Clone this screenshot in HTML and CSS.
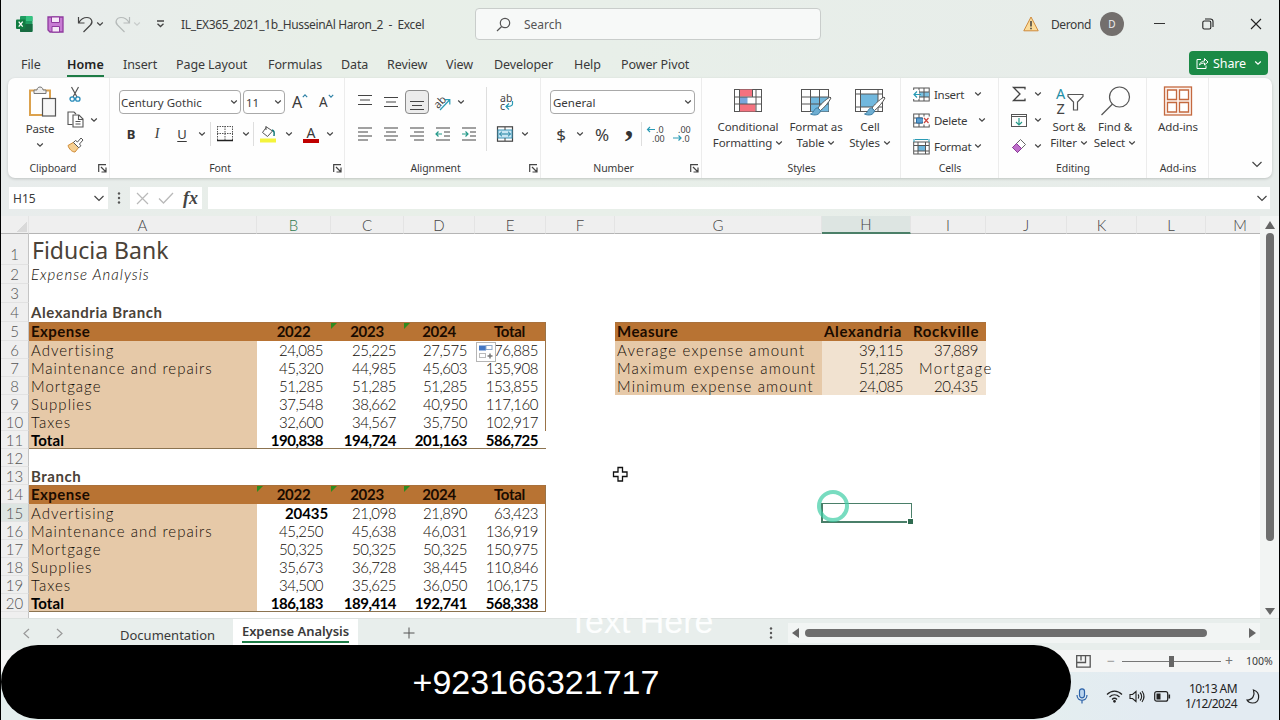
FILE: index.html
```html
<!DOCTYPE html>
<html lang="en">
<head>
    <meta charset="UTF-8">
    <meta name="viewport" content="width=device-width, initial-scale=1.0">
    <title>IL_EX365_2021_1b_HusseinAl Haron_2 - Excel</title>
    <link rel="stylesheet" href="styles.css">
</head>
<body>

<svg class="defs" width="0" height="0">
    <symbol id="chev" viewBox="0 0 8 6"><path d="M1.2 1.5 4 4.2 6.8 1.5" fill="none" stroke="currentColor" stroke-width="1.2"/></symbol>
    <symbol id="chev-big" viewBox="0 0 12 9"><path d="M1.500 2 6 6.500 10.500 2" fill="none" stroke="currentColor" stroke-width="1.2"/></symbol>
    <symbol id="launch" viewBox="0 0 9 9"><path d="M.7 8V.7H8M3 3l4.5 4.5M8 3.5V8H3.5" fill="none" stroke="#444" stroke-width="1.2"/></symbol>
</svg>

<div class="window">
    <!-- title bar -->
    <div class="titlebar">
        <svg class="logo" width="17" height="16" viewBox="0 0 17 16"><rect x="4" width="12.500" height="16" rx="1" fill="#1f9d61"/><path d="M10 0h5.500a1 1 0 0 1 1 1v4H10z" fill="#35c481"/><path d="M4 8h12.500v7a1 1 0 0 1-1 1H5a1 1 0 0 1-1-1z" fill="#176b41"/><rect y="3.500" width="9.500" height="9.500" rx="1" fill="#107c41"/><path d="m2.700 5.700 4 5M6.700 5.700l-4 5" stroke="#fff" stroke-width="1.300"/></svg>
        <svg class="save" width="17" height="17" viewBox="0 0 17 17"><path d="M1 1h15v15H3l-2-2z" fill="#c77bd3" stroke="#8f3a9e" stroke-width="1.300"/><path d="M4.500 1h8v5.500h-8zM5 10.500h7.500V16H5z" fill="#f6e9f8" stroke="#8f3a9e"/></svg>
        <svg class="undo" width="17" height="17" viewBox="0 0 17 17" fill="none" stroke="#444" stroke-width="1.200"><path d="M1.500 1v6h6M1.800 6.700C4 3 6.800 1.500 10 1.500c4.500 0 6.500 4.500 3.500 7.500L6.500 16"/></svg>
        <svg class="chev undo-chev" width="8" height="6"><use href="#chev"/></svg>
        <svg class="redo" width="17" height="17" viewBox="0 0 17 17" fill="none" stroke="#b5bab9" stroke-width="1.200"><path d="M15.500 1v6h-6M15.200 6.700C13 3 10.200 1.500 7 1.500c-4.500 0-6.500 4.500-3.500 7.500l7 7"/></svg>
        <svg class="chev redo-chev" width="8" height="6"><use href="#chev"/></svg>
        <svg class="qat" width="9" height="8" viewBox="0 0 9 8" fill="none" stroke="#444" stroke-width="1.300"><path d="M1 1h7M1.500 3.700l3 2.800 3-2.800"/></svg>
        <span class="doc-name">IL_EX365_2021_1b_HusseinAl Haron_2 &nbsp;-&nbsp; Excel</span>
        <div class="search">
            <svg width="15" height="15" viewBox="0 0 15 15" fill="none" stroke="#555" stroke-width="1.200"><circle cx="9" cy="6" r="4.700"/><path d="M5.700 9.500 1 14"/></svg>
            <span>Search</span>
        </div>
        <svg class="warn" width="16" height="16" viewBox="0 0 16 16"><path d="M8 1 15.200 14.800H.8z" fill="#fbdc9a" stroke="#cf8a3c"/><path d="M8 5v5.500M8 11.800v1.500" stroke="#333" stroke-width="1.400"/></svg>
        <span class="user">Derond</span>
        <span class="avatar">D</span>
        <svg class="win-min" width="12" height="12" viewBox="0 0 12 12"><path d="M0 5.500h11" stroke="#333"/></svg>
        <svg class="win-max" width="12" height="12" viewBox="0 0 12 12" fill="none" stroke="#222" stroke-width="1.100"><rect x=".8" y="3" width="8" height="8" rx="1.500"/><path d="M3 1h5.500a2.500 2.500 0 0 1 2.500 2.500V9"/></svg>
        <svg class="win-close" width="12" height="12" viewBox="0 0 12 12"><path d="m1 1 10 10M11 1 1 11" stroke="#222" stroke-width="1.100"/></svg>
    </div>

    <!-- ribbon tabs -->
    <div class="tabs">
        <span>File</span><span class="active">Home</span><span>Insert</span><span>Page Layout</span><span>Formulas</span><span>Data</span><span>Review</span><span>View</span><span>Developer</span><span>Help</span><span>Power Pivot</span>
        <div class="share">
            <svg width="13" height="12" viewBox="0 0 13 12" fill="none" stroke="#fff"><path d="M5 2.500H1v9h9V8.500M3.500 8C4 5.500 6 4 8.500 4V1.500L12 5 8.500 8V6C6.500 6 5 6.500 3.500 8z"/></svg>
            <span>Share</span>
            <svg class="chev" width="8" height="6"><use href="#chev"/></svg>
        </div>
    </div>

    <!-- ribbon -->
    <div class="ribbon">
        <div class="group clipboard">
            <div class="body">
                <div class="paste">
                    <svg width="30" height="32" viewBox="0 0 30 32"><rect x="2" y="4.500" width="20" height="24.500" fill="#fff" stroke="#dca24e" stroke-width="2"/><path d="M6 7.500V4h3c0-4 6-4 6 0h3v3.500z" fill="#eee" stroke="#777"/><rect x="14.500" y="12.500" width="13" height="17.500" fill="#f7f7f7" stroke="#555" stroke-width="1.200"/></svg>
                    <span>Paste</span>
                    <svg class="chev" width="8" height="6"><use href="#chev"/></svg>
                </div>
                <div class="clip-tools">
                    <svg width="12" height="17" viewBox="0 0 12 17" fill="none"><path d="M2.500 1 8 11M9.500 1 4 11" stroke="#555" stroke-width="1.200"/><circle cx="3.200" cy="13" r="2.200" stroke="#2a8cba" stroke-width="1.300"/><circle cx="8.800" cy="13" r="2.200" stroke="#2a8cba" stroke-width="1.300"/></svg>
                    <svg width="17" height="17" viewBox="0 0 17 17" fill="#fff" stroke="#555" stroke-width="1.100"><path d="M5.500 13.500H1V1h6l2 2"/><path d="M6 4h6l4 4v8H6zM11.500 4v4.500H16M8.500 10.500h5M8.500 13h5"/></svg>
                    <svg width="17" height="16" viewBox="0 0 17 16"><path d="M1 8.500 7 5l5 5-4 5c-3 0-6-3-7-6.500z" fill="#f6cf91" stroke="#d08b35"/><path d="m6.500 5.500 2-2 2 1.500L14 1l2 2-3.500 4 1.300 1.800-2 2z" fill="#fff" stroke="#555"/></svg>
                </div>
                <svg class="chev" width="8" height="6"><use href="#chev"/></svg>
            </div>
            <div class="label">Clipboard<svg width="9" height="9"><use href="#launch"/></svg></div>
        </div>

        <div class="group font">
            <div class="body stack">
                <div class="line">
                    <div class="combo font-name">Century Gothic<svg class="chev" width="8" height="6"><use href="#chev"/></svg></div>
                    <div class="combo font-size">11<svg class="chev" width="8" height="6"><use href="#chev"/></svg></div>
                    <span class="resize grow">A<svg width="6" height="4" viewBox="0 0 6 4"><path d="m.8 3.200 2.200-2.400 2.200 2.400"/></svg></span>
                    <span class="resize shrink">A<svg width="6" height="4" viewBox="0 0 6 4"><path d="m.8.800 2.200 2.400L5.200.800"/></svg></span>
                </div>
                <div class="line">
                    <b class="w26">B</b><span class="w26 ital">I</span><span class="w24 under">U</span>
                    <svg class="chev w16" height="6"><use href="#chev"/></svg><i class="sep"></i>
                    <svg class="w28" height="16" viewBox="0 0 28 16" fill="none" stroke="#555"><path d="M6 .5h16M6.500 0v14M14 0v14M21.500 0v14M6 7.500h16" stroke-dasharray="1.500 1"/><path d="M6 14.500h16" stroke="#222" stroke-width="1.500"/></svg>
                    <svg class="chev w14" height="6"><use href="#chev"/></svg><i class="sep"></i>
                    <svg class="w28" height="18" viewBox="0 0 28 18"><path d="m12.500 2-4 5.500 5 4 5-5.500zM12 1v4" fill="#fff" stroke="#555"/><path d="M18 5c2.500.5 2.500 3 2 6" fill="none" stroke="#177" stroke-width="1.500"/><rect x="6" y="13.500" width="16" height="4" fill="#f4f43c"/></svg>
                    <svg class="chev w14" height="6"><use href="#chev"/></svg>
                    <span class="w30 color">A</span>
                    <svg class="chev w8" height="6"><use href="#chev"/></svg>
                </div>
            </div>
            <div class="label">Font<svg width="9" height="9"><use href="#launch"/></svg></div>
        </div>

        <div class="group align">
            <div class="body">
                <div class="stack">
                    <div class="line">
                        <svg class="w26" height="24" viewBox="0 0 26 24" stroke="#444" stroke-width="1.200"><path d="M6 5.500h14M8 10h10M6 14.500h14"/></svg>
                        <svg class="w26" height="24" viewBox="0 0 26 24" stroke="#444" stroke-width="1.200"><path d="M6 7.500h14M8 12h10M6 16.500h14"/></svg>
                        <svg class="w26 pressed" height="24" viewBox="0 0 26 24" stroke="#444" stroke-width="1.200"><rect x="1.500" y=".5" width="23" height="23" rx="3.500" fill="#ececec" stroke="#8a8a8a" stroke-width="1"/><path d="M6 11.500h14M8 15.500h10M6 19.500h14"/></svg>
                        <svg class="w26" height="22" viewBox="0 0 26 22"><text x="4" y="15" font-size="11" transform="rotate(-45 10 12)" fill="#444">ab</text><path d="m10 19 9.500-10M15 8.700H19.800V13.500" fill="none" stroke="#2a9bb5" stroke-width="1.200"/></svg>
                        <svg class="chev w10" height="6"><use href="#chev"/></svg>
                    </div>
                    <div class="line">
                        <svg class="w26" height="16" viewBox="0 0 26 16" stroke="#444" stroke-width="1.200"><path d="M6 2h14M6 6h10M6 10h14M6 14h10"/></svg>
                        <svg class="w26" height="16" viewBox="0 0 26 16" stroke="#444" stroke-width="1.200"><path d="M6 2h14M8 6h10M6 10h14M8 14h10"/></svg>
                        <svg class="w26" height="16" viewBox="0 0 26 16" stroke="#444" stroke-width="1.200"><path d="M6 2h14M10 6h10M6 10h14M10 14h10"/></svg>
                        <svg class="w26" height="16" viewBox="0 0 26 16" stroke="#444" stroke-width="1.200" fill="none"><path d="M6 2h14M14 6h6M14 10h6M6 14h14"/><path d="M12 8H6M8.500 5.500 6 8l2.500 2.500" stroke="#259a8a"/></svg>
                        <svg class="w26" height="16" viewBox="0 0 26 16" stroke="#444" stroke-width="1.200" fill="none"><path d="M6 2h14M14 6h6M14 10h6M6 14h14"/><path d="M6 8h6M9.500 5.500 12 8l-2.500 2.500" stroke="#259a8a"/></svg>
                    </div>
                </div>
                <i class="sep tall"></i>
                <div class="stack merge">
                    <div class="line">
                        <svg width="38" height="18" viewBox="0 0 38 18"><text x="13" y="8.500" font-size="10.500" fill="#444">ab</text><text x="13" y="16.500" font-size="10.500" fill="#444">c</text><path d="M25.500 8v3c0 2-2 2.500-6 2.500M22 10.500l-3 3 3 3" fill="none" stroke="#2a9bb5" stroke-width="1.200"/></svg>
                    </div>
                    <div class="line">
                        <svg class="w34" height="16" viewBox="0 0 34 16"><rect x="10.500" y=".8" width="15" height="14.400" fill="#fff" stroke="#444" stroke-width="1.200"/><rect x="11" y="4" width="14" height="8" fill="#c9e6f3" stroke="#3b93b5"/><path d="M18 1v3M18 12v3" stroke="#444"/><path d="M12.500 8h11M15 5.700 12.500 8l2.500 2.300M21 5.700 23.500 8 21 10.300" fill="none" stroke="#1b7f9e"/></svg>
                        <svg class="chev w8" height="6"><use href="#chev"/></svg>
                    </div>
                </div>
            </div>
            <div class="label">Alignment<svg width="9" height="9"><use href="#launch"/></svg></div>
        </div>

        <div class="group number">
            <div class="body stack">
                <div class="line"><div class="combo format">General<svg class="chev" width="8" height="6"><use href="#chev"/></svg></div></div>
                <div class="line">
                    <span class="w24 sym">$</span><svg class="chev w14" height="6"><use href="#chev"/></svg>
                    <span class="w30 sym">%</span><b class="w24 comma">,</b><i class="sep"></i>
                    <svg class="w26" height="18" viewBox="0 0 26 18"><path d="M13 4.500H5.500M8 2 5.500 4.500 8 7" fill="none" stroke="#2a9bb5" stroke-width="1.200"/><text x="14" y="8" font-size="9" fill="#444">.0</text><text x="10" y="16.500" font-size="9" fill="#444">.00</text></svg>
                    <svg class="w26" height="18" viewBox="0 0 26 18"><text x="10" y="8" font-size="9" fill="#444">.00</text><path d="M5 13h8M10.500 10.500 13 13l-2.500 2.500" fill="none" stroke="#2a9bb5" stroke-width="1.200"/><text x="14" y="16.500" font-size="9" fill="#444">.0</text></svg>
                </div>
            </div>
            <div class="label">Number<svg width="9" height="9"><use href="#launch"/></svg></div>
        </div>

        <div class="group styles">
            <div class="body">
                <div class="big cond">
                    <svg width="30" height="30" viewBox="0 0 30 30"><rect x="1.500" y="3.500" width="27" height="22" fill="#fff" stroke="#555"/><path d="M6.500 3.500h13v7h-13zM6.500 18h16v7.500h-16z" fill="#f4727f"/><path d="M6.500 11h8v7h-8z" fill="#7aa7dc"/><path d="M1.500 11h27M1.500 18h27M6.500 3.500v22M19.500 3.500V11M23 3.500v22" stroke="#555" fill="none"/></svg>
                    <span>Conditional</span><span>Formatting <svg class="chev" width="8" height="6"><use href="#chev"/></svg></span>
                </div>
                <div class="big table">
                    <svg width="32" height="30" viewBox="0 0 32 30"><rect x="1.500" y="3.500" width="27" height="22" fill="#fff" stroke="#555"/><path d="M11 11h17.500v14.500H11z" fill="#71b8de"/><path d="M1.500 11h27M1.500 18h27M10.500 3.500v22M19.500 3.500v22" stroke="#555" fill="none"/><path d="M30 11c-5 3-10 8-12 11l2.500 2.500C24 22 29 16 31 12z" fill="#fff" stroke="#555"/><path d="M17.500 22c-4 0-3 5-7 6 4 2 9.500 1 10-3.500z" fill="#6eaed2" stroke="#3c7ea5"/></svg>
                    <span>Format as</span><span>Table <svg class="chev" width="8" height="6"><use href="#chev"/></svg></span>
                </div>
                <div class="big cell">
                    <svg width="32" height="30" viewBox="0 0 32 30"><rect x="1.500" y="3.500" width="27" height="22" fill="#fff" stroke="#555"/><path d="M6.500 8h17.500v13H6.500z" fill="#71b8de"/><path d="M1.500 8h27M1.500 21h27M6.500 3.500v22M24 3.500v22" stroke="#555" fill="none"/><path d="M30 11c-5 3-10 8-12 11l2.500 2.500C24 22 29 16 31 12z" fill="#fff" stroke="#555"/><path d="M17.500 22c-4 0-3 5-7 6 4 2 9.500 1 10-3.500z" fill="#6eaed2" stroke="#3c7ea5"/></svg>
                    <span>Cell</span><span>Styles <svg class="chev" width="8" height="6"><use href="#chev"/></svg></span>
                </div>
            </div>
            <div class="label">Styles</div>
        </div>

        <div class="group cells">
            <div class="body">
                <div class="item"><svg width="17" height="15" viewBox="0 0 17 15" fill="none"><rect x=".7" y="1" width="15.500" height="13" fill="#fff" stroke="#555"/><path d="M7 5h9v5H7z" fill="#7cc1e2"/><path d="M6 1v13M11 1v13M6 5h10M6 10h10" stroke="#555"/><path d="M0 3h6v9H0z" fill="#fff"/><path d="M8 7.500H1M4 4.500l-3 3 3 3" stroke="#2a9bb5" stroke-width="1.200"/></svg><span>Insert</span><svg class="chev" width="8" height="6"><use href="#chev"/></svg></div>
                <div class="item wide"><svg width="17" height="15" viewBox="0 0 17 15" fill="none"><rect x=".7" y="1" width="15.500" height="13" fill="#fff" stroke="#555"/><path d="M1 5h15M1 10h15M6 1v13M11 1v13" stroke="#555"/><path d="M3.500 5H9l2 2.500L9 10H3.500z" fill="#5c9fd0" stroke="#2b6fa5"/><path d="M10 3.500h7v8h-7z" fill="#fff"/><path d="m11 5 4.500 5M15.500 5 11 10" stroke="#c9453f" stroke-width="1.200"/></svg><span>Delete</span><svg class="chev" width="8" height="6"><use href="#chev"/></svg></div>
                <div class="item"><svg width="17" height="17" viewBox="0 0 17 17" fill="none"><rect x=".7" y="4" width="15.500" height="12" fill="#fff" stroke="#555"/><path d="M5 7h7.500v6H5z" fill="#6eb6dc"/><path d="M1 7.500h15M1 13h15M5 4v12M12.500 4v12" stroke="#555"/><path d="M1 1v3M16 1v3M2 1.500h13" stroke="#2a9bb5"/></svg><span>Format</span><svg class="chev" width="8" height="6"><use href="#chev"/></svg></div>
            </div>
            <div class="label">Cells</div>
        </div>

        <div class="group editing">
            <div class="body">
                <div class="edit-tools">
                    <div><svg width="16" height="16" viewBox="0 0 16 16" fill="none" stroke="#444" stroke-width="1.300"><path d="M14 3.500V1.500H2.500L9 8l-6.500 6.500H14v-2"/></svg><svg class="chev" width="8" height="6"><use href="#chev"/></svg></div>
                    <div><svg width="16" height="15" viewBox="0 0 16 15" fill="none" stroke="#555"><rect x=".5" y="1.500" width="15" height="12"/><path d="M1 3.500h14"/><path d="M8 5v7M5 9l3 3 3-3" stroke="#259a8a" stroke-width="1.200"/></svg><svg class="chev" width="8" height="6"><use href="#chev"/></svg></div>
                    <div><svg width="16" height="16" viewBox="0 0 16 16"><path d="m9.500 1.500 5 5-8 8-5-5z" fill="#fff" stroke="#666"/><path d="m5.500 5.500 5 5-4 4-5-5z" fill="#bf6fcb" stroke="#8b3b99"/></svg><svg class="chev" width="8" height="6"><use href="#chev"/></svg></div>
                </div>
                <div class="big sort">
                    <svg width="30" height="30" viewBox="0 0 30 30" fill="none"><text x="2" y="12.500" font-size="14.500" fill="#1f8fa8">A</text><text x="2.500" y="28" font-size="14.500" fill="#444">Z</text><path d="M14 8.500h15v2L23.500 16v8h-4v-8L14 10.500z" stroke="#555" stroke-width="1.200"/></svg>
                    <span>Sort &amp;</span><span>Filter <svg class="chev" width="8" height="6"><use href="#chev"/></svg></span>
                </div>
                <div class="big find">
                    <svg width="30" height="30" viewBox="0 0 30 30" fill="none" stroke="#555" stroke-width="1.200"><circle cx="19.500" cy="11" r="10"/><path d="M12.500 18 1.500 29"/></svg>
                    <span>Find &amp;</span><span>Select <svg class="chev" width="8" height="6"><use href="#chev"/></svg></span>
                </div>
            </div>
            <div class="label">Editing</div>
        </div>

        <div class="group addins">
            <div class="body">
                <div class="big">
                    <svg width="30" height="30" viewBox="0 0 30 30" fill="none" stroke="#c4693f" stroke-width="1.300"><rect x="1.500" y="1" width="27" height="28" fill="#fdf3ee"/><path d="M4.500 4h9v9.500h-9zM16.500 4h9v9.500h-9zM4.500 16.500h9V26h-9zM16.500 16.500h9V26h-9z" fill="#fff"/></svg>
                    <span>Add-ins</span>
                </div>
            </div>
            <div class="label">Add-ins</div>
        </div>

        <svg class="chev collapse" width="12" height="9"><use href="#chev-big"/></svg>
    </div>

    <!-- formula bar -->
    <div class="formula">
        <div class="name-box">H15<svg class="chev" width="12" height="9"><use href="#chev-big"/></svg></div>
        <svg class="dots" width="4" height="12" viewBox="0 0 4 12" fill="#555"><circle cx="2" cy="1.500" r="1.200"/><circle cx="2" cy="6" r="1.200"/><circle cx="2" cy="10.500" r="1.200"/></svg>
        <div class="fx">
            <svg width="13" height="13" viewBox="0 0 13 13"><path d="m1 1 11 11M12 1 1 12" stroke="#b9b9b9" stroke-width="1.200"/></svg>
            <svg width="16" height="12" viewBox="0 0 16 12" fill="none"><path d="m1 6.500 4.500 4.500L15 1" stroke="#b9b9b9" stroke-width="1.300"/></svg>
            <i>fx</i>
        </div>
        <div class="formula-input"><svg class="chev" width="12" height="9"><use href="#chev-big"/></svg></div>
    </div>

    <!-- worksheet -->
    <div class="sheet">
        <div class="grid">
            <table>
                <colgroup><col class="rh"><col class="a"><col class="b"><col class="c"><col class="d"><col class="e"><col class="f"><col class="g"><col class="h"><col class="i"><col class="j"><col class="k"><col class="l"><col class="m"></colgroup>
                <tr class="heads"><th class="corner"></th><th>A</th><th class="green">B</th><th>C</th><th>D</th><th>E</th><th>F</th><th>G</th><th class="sel">H</th><th>I</th><th>J</th><th>K</th><th>L</th><th>M</th></tr>
                <tr class="r1"><th>1</th><td class="bank" colspan="13">Fiducia Bank</td></tr>
                <tr class="r19"><th>2</th><td class="sub" colspan="13">Expense Analysis</td></tr>
                <tr class="r19"><th>3</th><td colspan="13"></td></tr>
                <tr class="r19"><th>4</th><td class="branch" colspan="13">Alexandria Branch</td></tr>
                <tr class="r19 head"><th>5</th><td class="hd left">Expense</td><td class="hd">2022</td><td class="hd err">2023</td><td class="hd err">2024</td><td class="hd edge">Total</td><td></td><td class="hd left">Measure</td><td class="hd left name">Alexandria</td><td class="hd left name">Rockville</td><td colspan="4"></td></tr>
                <tr><th>6</th><td class="tan">Advertising</td><td class="n">24,085</td><td class="n">25,225</td><td class="n">27,575</td><td class="n edge">76,885</td><td></td><td class="tan m">Average expense amount</td><td class="n pale">39,115</td><td class="n pale">37,889</td><td colspan="4"></td></tr>
                <tr><th>7</th><td class="tan">Maintenance and repairs</td><td class="n">45,320</td><td class="n">44,985</td><td class="n">45,603</td><td class="n edge">135,908</td><td></td><td class="tan m">Maximum expense amount</td><td class="n pale">51,285</td><td class="pale spill">Mortgage</td><td colspan="4"></td></tr>
                <tr><th>8</th><td class="tan">Mortgage</td><td class="n">51,285</td><td class="n">51,285</td><td class="n">51,285</td><td class="n edge">153,855</td><td></td><td class="tan m">Minimum expense amount</td><td class="n pale">24,085</td><td class="n pale">20,435</td><td colspan="4"></td></tr>
                <tr><th>9</th><td class="tan">Supplies</td><td class="n">37,548</td><td class="n">38,662</td><td class="n">40,950</td><td class="n edge">117,160</td><td colspan="8"></td></tr>
                <tr><th>10</th><td class="tan">Taxes</td><td class="n">32,600</td><td class="n">34,567</td><td class="n">35,750</td><td class="n edge">102,917</td><td colspan="8"></td></tr>
                <tr class="total"><th>11</th><td class="tan">Total</td><td class="n">190,838</td><td class="n">194,724</td><td class="n">201,163</td><td class="n">586,725</td><td colspan="8"></td></tr>
                <tr><th>12</th><td colspan="13"></td></tr>
                <tr><th>13</th><td class="branch" colspan="13">Branch</td></tr>
                <tr class="r19 head"><th>14</th><td class="hd left">Expense</td><td class="hd err">2022</td><td class="hd err">2023</td><td class="hd err">2024</td><td class="hd edge">Total</td><td colspan="8"></td></tr>
                <tr><th class="sel">15</th><td class="tan">Advertising</td><td class="n typed">20435</td><td class="n">21,098</td><td class="n">21,890</td><td class="n edge">63,423</td><td colspan="8"></td></tr>
                <tr><th>16</th><td class="tan">Maintenance and repairs</td><td class="n">45,250</td><td class="n">45,638</td><td class="n">46,031</td><td class="n edge">136,919</td><td colspan="8"></td></tr>
                <tr><th>17</th><td class="tan">Mortgage</td><td class="n">50,325</td><td class="n">50,325</td><td class="n">50,325</td><td class="n edge">150,975</td><td colspan="8"></td></tr>
                <tr><th>18</th><td class="tan">Supplies</td><td class="n">35,673</td><td class="n">36,728</td><td class="n">38,445</td><td class="n edge">110,846</td><td colspan="8"></td></tr>
                <tr><th>19</th><td class="tan">Taxes</td><td class="n">34,500</td><td class="n">35,625</td><td class="n">36,050</td><td class="n edge">106,175</td><td colspan="8"></td></tr>
                <tr class="total"><th>20</th><td class="tan">Total</td><td class="n">186,183</td><td class="n">189,414</td><td class="n">192,741</td><td class="n edge">568,338</td><td colspan="8"></td></tr>
                <tr class="rest"><th></th><td colspan="13"></td></tr>
            </table>
        </div>
        <div class="vscroll"><i class="up"></i><i class="thumb"></i><i class="down"></i></div>

        <svg class="fill-options" width="20" height="20" viewBox="0 0 20 20"><rect x=".5" y=".5" width="19" height="19" fill="#fff" stroke="#b5b5b5"/><rect x="3" y="3.500" width="7" height="5" fill="#4377c4"/><rect x="10" y="3.500" width="6" height="4" fill="none" stroke="#8fa9c9"/><rect x="3.500" y="11.500" width="6" height="4" fill="none" stroke="#bbb"/><path d="M14 11.500v5M11.500 14h5" stroke="#777" stroke-width="1.500"/></svg>
        <div class="active-cell"></div>
        <div class="click-ring"></div>
        <svg class="cursor" width="16" height="16" viewBox="0 0 16 16"><path d="M6 1.500h4.500V6H15v4.500h-4.500V15H6v-4.500H1.500V6H6z" fill="#fff" stroke="#111" stroke-width="1.300"/></svg>
    </div>

    <!-- sheet tabs -->
    <div class="sheet-tabs">
        <svg class="prev" width="7" height="11" viewBox="0 0 7 11" fill="none" stroke="#999" stroke-width="1.200"><path d="M6 1 1 5.500 6 10"/></svg>
        <svg class="next" width="7" height="11" viewBox="0 0 7 11" fill="none" stroke="#999" stroke-width="1.200"><path d="m1 1 5 4.500L1 10"/></svg>
        <span class="tab">Documentation</span>
        <span class="tab current"><span>Expense Analysis</span></span>
        <svg class="plus" width="12" height="12" viewBox="0 0 12 12"><path d="M6 .5v11M.5 6h11" stroke="#555"/></svg>
        <svg class="dots" width="4" height="12" viewBox="0 0 4 12" fill="#555"><circle cx="2" cy="1.500" r="1.200"/><circle cx="2" cy="6" r="1.200"/><circle cx="2" cy="10.500" r="1.200"/></svg>
        <div class="hscroll"><i class="back"></i><i class="thumb"></i><i class="fwd"></i></div>
        <span class="watermark">Text Here</span>
    </div>

    <!-- status bar -->
    <div class="status">
        <svg class="view" width="15" height="13" viewBox="0 0 15 13" fill="none" stroke="#555" stroke-width="1.300"><path d="M.7.700h13.500v11.500H.7zM5 1v4.500M9.500 1v6.500H.7"/></svg>
        <span class="minus">−</span>
        <div class="slider"><i></i></div>
        <span class="more">+</span>
        <span class="zoom">100%</span>
    </div>

    <!-- taskbar -->
    <div class="taskbar">
        <svg class="mic" width="12" height="16" viewBox="0 0 12 16" fill="none" stroke="#2b62a8" stroke-width="1.200"><rect x="3.500" y=".8" width="5" height="9" rx="2.500" fill="#b9d4ee"/><path d="M1 7c0 7 10 7 10 0M6 12.500v3"/></svg>
        <svg class="wifi" width="17" height="13" viewBox="0 0 17 13" fill="none" stroke="#222" stroke-width="1.200"><path d="M1 4.500c4.500-4.500 10.500-4.500 15 0M3.500 7c3-3 7-3 10 0M6 9.500c1.500-1.500 3.500-1.500 5 0"/><circle cx="8.500" cy="11.300" r=".8" fill="#222"/></svg>
        <svg class="sound" width="15" height="13" viewBox="0 0 15 13" fill="none" stroke="#222" stroke-width="1.100"><path d="M1 4.500h2.500L7 1.500v10L3.500 8.500H1zM9 4.500c1 1 1 3 0 4M11 2.500c2.200 2.200 2.200 5.800 0 8M13 1c2.500 3.500 2.500 7.500 0 11"/></svg>
        <svg class="battery" width="17" height="11" viewBox="0 0 17 11"><rect x=".7" y=".7" width="13" height="9.500" rx="2" fill="none" stroke="#222" stroke-width="1.200"/><rect x="2.500" y="2.500" width="4" height="6" fill="#222"/><path d="M15.300 3.500v4" stroke="#222" stroke-width="1.600"/></svg>
        <div class="clock"><span>10:13 AM</span><span>1/12/2024</span></div>
        <svg class="moon" width="14" height="15" viewBox="0 0 14 15" fill="none" stroke="#222" stroke-width="1.200"><path d="M7.500 1C15 3.500 14 14 6.500 14 4 14 2 12.800 1 11c6 0 8-5 6.500-10z"/></svg>
    </div>

    <div class="banner">+923166321717</div>
</div>

</body>
</html>
```
FILE: styles.css
```css
* {
    box-sizing: border-box;
}
body {
    margin: 0;
    width: 1280px;
    height: 720px;
    overflow: hidden;
    background-color: #000;
    font-family: "Noto Sans", "Open Sans", sans-serif;
    font-size: 12px;
    color: #3a3a3a;
}
svg {
    display: block;
    flex: none;
    overflow: visible;
}
svg text {
    font-family: "Noto Sans", sans-serif;
}
.defs {
    position: absolute;
}
.chev {
    color: #444;
}
.window {
    position: relative;
    display: flex;
    flex-direction: column;
    width: 1278px;
    height: 720px;
    margin-left: 1px;
    overflow: hidden;
    background: linear-gradient(90deg, #e8ecec 0, #e8efe8 330px, #e8efe9 600px, #e7ecea 1278px);
}

/* title bar */
.titlebar {
    display: flex;
    align-items: center;
    height: 48px;
    padding-left: 15px;
}
.save { margin-left: 14px; }
.undo { margin-left: 13px; }
.undo-chev { margin-left: 2px; }
.redo { margin-left: 10px; }
.redo-chev { margin-left: 2px; color: #c8cccb; }
.qat { margin-left: 15px; }
.doc-name {
    width: 294px;
    margin-left: 16px;
    white-space: nowrap;
    letter-spacing: -0.35px;
}
.search {
    display: flex;
    align-items: center;
    width: 346px;
    height: 32px;
    padding-left: 20px;
    gap: 13px;
    border: 1px solid #c9cdcb;
    border-radius: 4px;
    background-color: #f7f9f8;
    color: #555;
}
.warn { margin-left: 202px; }
.user { margin-left: 12px; width: 49px; letter-spacing: -0.4px; }
.avatar {
    width: 24px;
    height: 24px;
    border-radius: 50%;
    background-color: #736f6d;
    color: #eee;
    font-size: 10px;
    line-height: 24px;
    text-align: center;
}
.win-min { margin-left: 30px; }
.win-max { margin-left: 36px; }
.win-close { margin-left: 36px; }

/* ribbon tabs */
.tabs {
    display: grid;
    grid-template-columns: 46px 56px 53px 92px 73px 46px 59px 48px 80px 47px 568px auto;
    align-items: center;
    height: 30px;
    padding: 2px 0 0 20px;
    font-size: 12.5px;
    letter-spacing: -0.1px;
    white-space: nowrap;
}
.tabs .active {
    justify-self: start;
    height: 23px;
    line-height: 21px;
    margin-top: 2px;
    border-bottom: 2px solid #1e7c46;
    color: #222;
    font-weight: 600;
    letter-spacing: 0.1px;
}
.share {
    display: flex;
    align-items: center;
    width: 79px;
    height: 24px;
    margin-top: -2px;
    gap: 4px;
    padding-left: 7px;
    border-radius: 4px;
    background-color: #1b8a46;
    color: #fff;
}
.share .chev { margin-left: 4px; color: #fff; }

/* ribbon */
.ribbon {
    display: flex;
    width: 1264px;
    height: 100px;
    margin-left: 7px;
    border-radius: 7px;
    background-color: #fefefe;
    box-shadow: 0 1px 3px rgba(0, 0, 0, 0.18);
}
.group {
    display: flex;
    flex-direction: column;
    flex: none;
    border-right: 1px solid #ececec;
}
.body {
    display: flex;
    height: 80px;
}
.label {
    display: flex;
    justify-content: center;
    align-items: center;
    position: relative;
    height: 20px;
    padding-left: 1px;
    font-size: 10.5px;
    letter-spacing: -0.1px;
}
.label svg {
    position: absolute;
    right: 2px;
    top: 6px;
}
.stack {
    display: flex;
    flex-direction: column;
    padding-top: 8px;
}
.line {
    display: flex;
    align-items: center;
    height: 32px;
}
.line > span, .line > b {
    text-align: center;
    flex: none;
}
.w8 { width: 8px; }
.w10 { width: 10px; }
.w14 { width: 14px; }
.w16 { width: 16px; }
.w24 { width: 24px; }
.w26 { width: 26px; }
.w28 { width: 28px; }
.w30 { width: 30px; }
.w34 { width: 34px; }
.sep {
    width: 1px;
    height: 24px;
    background-color: #dedede;
}
.sep.tall {
    height: 64px;
    margin-top: 9px;
}
.combo {
    display: flex;
    justify-content: space-between;
    align-items: center;
    height: 24px;
    padding: 0 2px 0 1px;
    border: 1px solid #a9a9a9;
    border-radius: 4px;
    background-color: #fff;
    font-size: 11.5px;
}
.clipboard { width: 102px; }
.clipboard .body { padding-left: 7px; }
.paste {
    display: flex;
    flex-direction: column;
    align-items: center;
    width: 50px;
    padding-top: 8px;
    font-size: 11.5px;
    letter-spacing: -0.2px;
}
.paste > svg:first-child { margin-left: 6px; }
.paste span { line-height: 18px; margin-top: 2px; }
.paste .chev { margin-top: 4px; }
.clip-tools {
    display: grid;
    grid-template-rows: 25px 25px 25px;
    width: 20px;
    padding-top: 4px;
    align-items: center;
    justify-items: center;
}
.clipboard .body > .chev { margin: 39px 0 0 5px; }
.clipboard .label { padding-right: 12px; }

.font { width: 235px; }
.font .stack, .font .body { padding-left: 9px; }
.font .line + .line { margin-left: -1px; }
.font-name { width: 122px; }
.font-size { width: 42px; margin-left: 2px; padding-left: 2px; }
.resize {
    display: flex;
    align-items: flex-start;
    width: 16px;
    line-height: 20px;
}
.resize svg { fill: none; stroke: #2a7fa5; stroke-width: 1.1; margin-top: 2px; }
.grow { margin-left: 7px; font-size: 16px; }
.shrink { margin-left: 11px; font-size: 13.5px; }
.line b { font-size: 13px; color: #333; }
.ital { font-family: "Liberation Serif", serif; font-style: italic; font-size: 14px; }
.under { font-size: 13px; text-decoration: underline; text-underline-offset: 2px; }
.line .color {
    width: 16px;
    height: 17px;
    margin: 0 7px;
    border-bottom: 4px solid #c00000;
    font-size: 14px;
    line-height: 13px;
}
.font .label { padding-right: 15px; }

.align { width: 196px; }
.align .body { padding-left: 7px; }
.align .sep.tall { margin-left: 4px; }
.align .label { padding-right: 15px; }

.number { width: 161px; }
.number .body { padding-left: 9px; }
.number .line + .line { margin-left: -1px; }
.format { width: 145px; padding-left: 2px; }
.sym { font-size: 17px; }
.line .comma { font-family: "Liberation Serif", serif; font-size: 34px; line-height: 10px; height: 29px; }
.number .label { padding-right: 16px; }

.big {
    display: flex;
    flex-direction: column;
    align-items: center;
    padding-top: 8px;
    font-size: 11.5px;
    line-height: 16px;
    letter-spacing: -0.1px;
    white-space: nowrap;
}
.big > svg { margin-bottom: 3px; }
.big span { display: flex; align-items: center; gap: 3px; }
.styles { width: 199px; }
.cond { width: 80px; margin-left: 6px; }
.table { width: 56px; }
.cell { width: 52px; }
.cells { width: 98px; }
.cells .body {
    display: grid;
    grid-template-rows: 26px 26px 26px;
    padding: 3px 0 0 12px;
}
.item {
    display: flex;
    align-items: center;
    font-size: 11.5px;
    letter-spacing: -0.3px;
    width: 73px;
}
.item span { margin-left: 4px; flex: 1; }
.item .chev { margin-right: 4px; }
.item.wide .chev { margin-right: 0; }
.editing { width: 148px; }
.edit-tools {
    display: grid;
    grid-template-rows: 26px 26px 26px;
    width: 45px;
    padding: 3px 0 0 12px;
}
.edit-tools div { display: flex; align-items: center; gap: 7px; }
.sort { width: 46px; margin-left: 2px; }
.find { width: 46px; }
.addins { width: 62px; }
.addins .body { justify-content: center; padding-left: 1px; }
.collapse { margin: 82px 0 0 42px; }

/* formula bar */
.formula {
    display: flex;
    align-items: center;
    height: 38px;
    padding: 2px 0 0 8px;
}
.name-box {
    display: flex;
    justify-content: space-between;
    align-items: center;
    width: 99px;
    height: 22px;
    padding: 0 3px 0 4px;
    background-color: #fff;
}
.formula .dots { margin-left: 9px; }
.fx {
    display: flex;
    align-items: center;
    gap: 9px;
    width: 72px;
    height: 22px;
    margin-left: 9px;
    padding-left: 6px;
    background-color: #fff;
}
.fx i {
    font-family: "Liberation Serif", serif;
    font-size: 18px;
    font-weight: 700;
    line-height: 18px;
    color: #444;
}
.formula-input {
    display: flex;
    justify-content: flex-end;
    align-items: center;
    width: 1062px;
    height: 22px;
    margin-left: 6px;
    padding-right: 2px;
    background-color: #fff;
}

/* worksheet */
.sheet {
    position: relative;
    display: flex;
    height: 402px;
}
.grid {
    width: 1259px;
    overflow: hidden;
    background-color: #fff;
}
table {
    width: 1274px;
    table-layout: fixed;
    border-collapse: separate;
    border-spacing: 0;
    font-family: Lato, sans-serif;
    font-size: 15px;
    font-weight: 300;
    color: #120c06;
}
col.rh { width: 28px; }
col.a { width: 228px; }
col.b { width: 74px; }
col.c { width: 73px; }
col.d { width: 71px; }
col.e { width: 71px; }
col.f { width: 69px; }
col.g { width: 207px; }
col.h { width: 89px; }
col.i { width: 75px; }
col.j { width: 81px; }
col.k { width: 70px; }
col.l { width: 69px; }
col.m { width: 69px; }
td, th {
    height: 18px;
    padding: 0 0 1px 2px;
    line-height: 16px;
    white-space: nowrap;
}
th {
    padding: 0;
    background-color: #efefef;
    border-right: 1px solid #c4c4c4;
    border-bottom: 1px solid #e2e2e2;
    color: #555;
    font-weight: 300;
}
.heads th {
    border-right: 1px solid #e4e4e4;
    border-bottom: 1px solid #b5b5b5;
    color: #444;
}
.heads .corner {
    background: linear-gradient(135deg, transparent 50%, #d9d9d9 50%) 15px 5px / 11px 11px no-repeat #efefef;
}
.heads .green { color: #2f7a4e; }
th.sel { background-color: #dde5e2; }
.heads .sel { border-bottom: 2px solid #4b7f68; line-height: 15px; }
.r1 td { height: 31px; }
.r1 th { vertical-align: bottom; padding-bottom: 2px; }
.r19 td { height: 19px; line-height: 17px; }
td.bank {
    padding: 1px 0 0 3px;
    font-family: "Noto Sans", sans-serif;
    font-size: 23px;
    font-weight: 400;
    line-height: 30px;
    color: #4a4238;
}
.sub { font-style: italic; letter-spacing: 1px; padding-bottom: 0; }
.r19 .sub { line-height: 19px; }
.branch { font-weight: 700; letter-spacing: 0.55px; color: #4a4238; }
.r19 .branch { line-height: 18px; }
.hd {
    background-color: #b87333;
    border-top: 1px solid #a9713c;
    color: #1a0b00;
    font-weight: 700;
    text-align: center;
    letter-spacing: -0.3px;
    padding: 0 1px 1px 0;
}
.hd.left { text-align: left; padding-left: 2px; letter-spacing: 0.45px; }
.hd.err { background: linear-gradient(135deg, #2e8b1f 4px, transparent 4.5px) #b87333; }
.hd.name { letter-spacing: 0.65px; }
.tan { background-color: #e6c9a8; letter-spacing: 1px; }
.tan.m { letter-spacing: 1.15px; }
.pale { background-color: #f1e2d0; }
.n { text-align: right; padding-right: 8px; letter-spacing: -0.45px; }
.edge { border-right: 1px solid #9a7348; padding-right: 7px; }
.hd.edge { padding-right: 1px; }
.spill { padding-left: 8px; letter-spacing: 1.4px; }
.total td { font-weight: 700; color: #000; letter-spacing: -0.5px; }
.total td.tan { letter-spacing: 0.1px; }
.total .tan, .total .n { border-bottom: 1px solid #8c7350; padding-bottom: 0; }
.typed { font-weight: 700; color: #000; padding-right: 3px; letter-spacing: -0.1px; }
.rest th { border-bottom: 0; }

.vscroll {
    display: flex;
    flex-direction: column;
    align-items: center;
    width: 19px;
    padding: 5px 0 0 1px;
    background-color: #f2f4f3;
}
.vscroll i, .hscroll i { flex: none; }
.up {
    border: 5px solid transparent;
    border-top: 0;
    border-bottom: 8px solid #666;
}
.vscroll .thumb {
    width: 8px;
    height: 308px;
    margin-top: 4px;
    border-radius: 4px;
    background-color: #6e6e6e;
}
.down {
    margin-top: 67px;
    border: 5px solid transparent;
    border-bottom: 0;
    border-top: 7px solid #666;
}
.fill-options { position: absolute; left: 475px; top: 126px; }
.active-cell {
    position: absolute;
    left: 820px;
    top: 287px;
    width: 91px;
    height: 20px;
    border: 2px solid #4a7f69;
    border-width: 1px 1px 2px 2px;
}
.active-cell::after {
    content: "";
    position: absolute;
    right: -2px;
    bottom: -3px;
    width: 5px;
    height: 5px;
    background-color: #2f6b50;
    border: 1px solid #fff;
    border-width: 1px 0 0 1px;
}
.click-ring {
    position: absolute;
    left: 816px;
    top: 274px;
    width: 32px;
    height: 32px;
    border: 4px solid rgba(62, 205, 165, 0.7);
    border-radius: 50%;
}
.cursor { position: absolute; left: 611px; top: 250px; }

/* sheet tabs */
.sheet-tabs {
    position: relative;
    display: flex;
    align-items: center;
    height: 32px;
    background-color: #e8eeec;
    border-top: 1px solid #dde2e0;
}
.sheet-tabs > * { margin-bottom: 3px; }
.prev { margin-left: 22px; }
.next { margin-left: 26px; }
.sheet-tabs .tab {
    width: 113px;
    margin-left: 57px;
    padding-top: 3px;
    font-size: 13px;
    white-space: nowrap;
}
.sheet-tabs .current {
    width: 125px;
    height: 28px;
    margin: -4px 0 0 0;
    padding: 0;
    background-color: #fff;
    text-align: center;
    font-weight: 600;
    letter-spacing: -0.05px;
}
.current span {
    display: inline-block;
    height: 24px;
    line-height: 25px;
    border-bottom: 2px solid #1e7c46;
}
.plus { margin-left: 45px; }
.sheet-tabs .dots { margin-left: 354px; }
.hscroll {
    display: flex;
    align-items: center;
    height: 20px;
    margin-left: 15px;
    padding: 0 4px;
    background-color: #f2f5f4;
}
.back {
    border: 5px solid transparent;
    border-left: 0;
    border-right: 7px solid #666;
}
.hscroll .thumb {
    width: 402px;
    height: 8px;
    margin-left: 6px;
    border-radius: 4px;
    background-color: #6e6e6e;
}
.fwd {
    margin-left: 42px;
    border: 5px solid transparent;
    border-right: 0;
    border-left: 7px solid #666;
}
.watermark {
    position: absolute;
    left: 567px;
    top: -17px;
    font-family: "Liberation Sans", Arial, sans-serif;
    font-size: 34px;
    line-height: 38px;
    color: #fdfefe;
}

/* status bar */
.status {
    display: flex;
    align-items: center;
    height: 22px;
    padding-left: 1075px;
    background-color: #f4f5f5;
    font-size: 10.5px;
}
.minus { margin-left: 16px; width: 15px; font-size: 14px; line-height: 14px; color: #999; }
.slider {
    display: flex;
    justify-content: center;
    align-items: center;
    width: 99px;
    height: 12px;
    background: linear-gradient(#777, #777) 0 50% / 100% 1px no-repeat;
}
.slider i { width: 5px; height: 11px; background-color: #666; }
.more { margin-left: 4px; font-size: 14px; line-height: 14px; color: #777; }
.zoom { margin-left: 13px; }

/* taskbar */
.taskbar {
    display: flex;
    align-items: center;
    height: 48px;
    padding-left: 1075px;
    background: linear-gradient(90deg, #e4efee 0, #e4efee 1000px, #e3ebf2 1150px);
    font-size: 12px;
    color: #222;
}
.wifi { margin-left: 18px; }
.sound { margin-left: 6px; }
.battery { margin-left: 10px; }
.clock {
    display: flex;
    flex-direction: column;
    align-items: flex-end;
    width: 66px;
    line-height: 15px;
    letter-spacing: -0.55px;
}
.moon { margin-left: 9px; }

.banner {
    position: absolute;
    left: 0;
    top: 645px;
    width: 1070px;
    height: 74px;
    border-radius: 37px;
    background-color: #000;
    color: #fff;
    font-family: "Liberation Sans", Arial, sans-serif;
    font-size: 34px;
    line-height: 74px;
    text-align: center;
}
```
